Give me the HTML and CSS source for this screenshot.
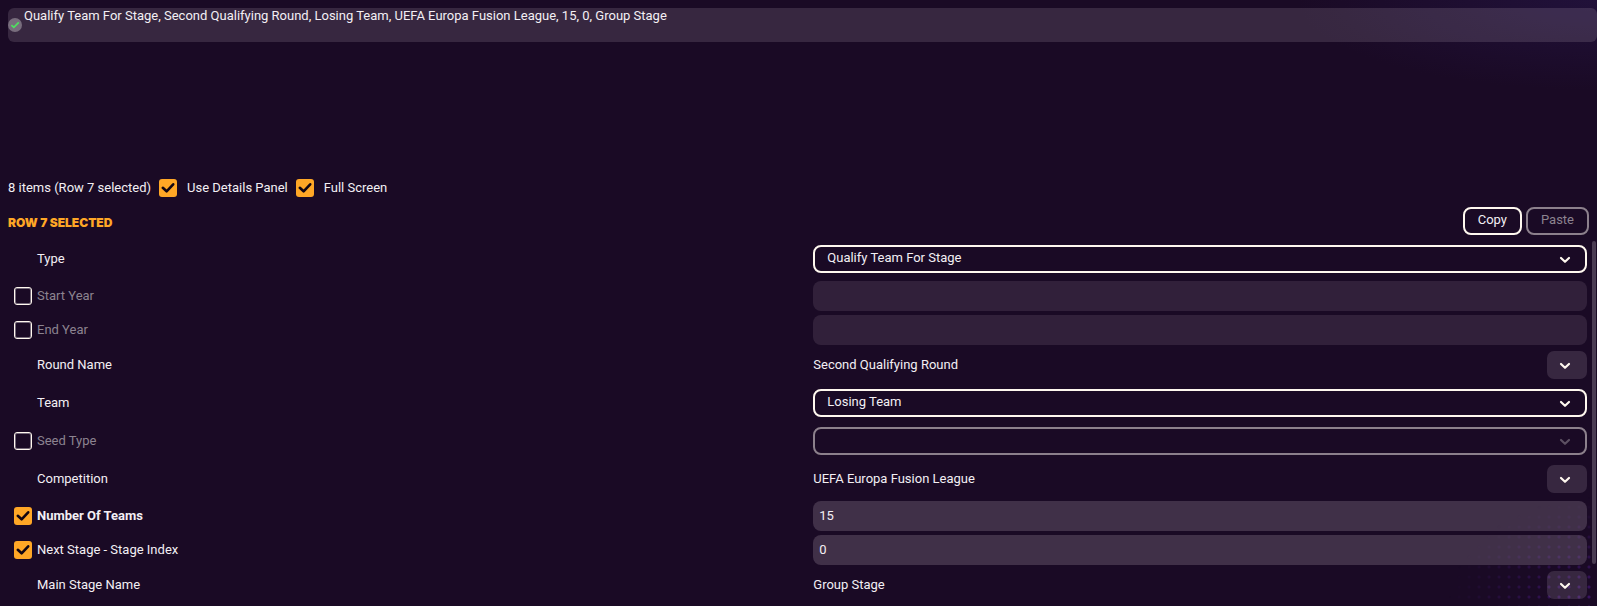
FILE: index.html
```html
<!DOCTYPE html>
<html lang="en">
<head>
    <meta charset="UTF-8">
    <meta name="viewport" content="width=device-width, initial-scale=1.0">
    <title>Row Details</title>
    <link rel="stylesheet" href="styles.css">
</head>
<body>
    <svg class="defs" aria-hidden="true">
        <symbol id="chevron" viewBox="0 0 12 8"><path d="M2 2l4 3.8L10 2" fill="none" stroke="currentColor" stroke-width="2.2" stroke-linecap="round" stroke-linejoin="round"/></symbol>
    </svg>

    <div class="rows">
        <div class="row">
            <svg class="status" viewBox="0 0 14 14" aria-hidden="true"><circle cx="7" cy="7" r="7" fill="#786d7d"/><path d="M3.4 7.2l2.4 2.2 5-5" fill="none" stroke="#4fe060" stroke-width="1.7"/></svg>
            <span class="summary">Qualify Team For Stage, Second Qualifying Round, Losing Team, UEFA Europa Fusion League, 15, 0, Group Stage</span>
        </div>
    </div>

    <div class="toolbar">
        <span class="count">8 items (Row 7 selected)</span>
        <label><input type="checkbox" checked>Use Details Panel</label>
        <label><input type="checkbox" checked>Full Screen</label>
    </div>

    <div class="heading">
        <h2>ROW 7 SELECTED</h2>
        <button class="outline">Copy</button>
        <button class="outline" disabled>Paste</button>
    </div>

    <div class="details">
        <div class="fields">
            <div class="field">
                <label class="name" for="type">Type</label>
                <div class="select">
                    <select id="type"><option>Qualify Team For Stage</option></select>
                    <svg class="chevron"><use href="#chevron"/></svg>
                </div>
            </div>
            <div class="field text off">
                <input type="checkbox" id="useStart" aria-label="Use start year">
                <label class="name" for="start">Start Year</label>
                <input type="text" id="start" disabled>
            </div>
            <div class="field text off">
                <input type="checkbox" id="useEnd" aria-label="Use end year">
                <label class="name" for="end">End Year</label>
                <input type="text" id="end" disabled>
            </div>
            <div class="field">
                <span class="name">Round Name</span>
                <div class="picker">
                    <span>Second Qualifying Round</span>
                    <button class="drop" aria-label="Round Name"><svg class="chevron"><use href="#chevron"/></svg></button>
                </div>
            </div>
            <div class="field">
                <label class="name" for="team">Team</label>
                <div class="select">
                    <select id="team"><option>Losing Team</option></select>
                    <svg class="chevron"><use href="#chevron"/></svg>
                </div>
            </div>
            <div class="field off">
                <input type="checkbox" id="useSeed" aria-label="Use seed type">
                <label class="name" for="seed">Seed Type</label>
                <div class="select">
                    <select id="seed" disabled><option></option></select>
                    <svg class="chevron"><use href="#chevron"/></svg>
                </div>
            </div>
            <div class="field">
                <span class="name">Competition</span>
                <div class="picker">
                    <span>UEFA Europa Fusion League</span>
                    <button class="drop" aria-label="Competition"><svg class="chevron"><use href="#chevron"/></svg></button>
                </div>
            </div>
            <div class="field text">
                <input type="checkbox" id="useTeams" aria-label="Use number of teams" checked>
                <label class="name bold" for="teams">Number Of Teams</label>
                <input type="text" id="teams" value="15">
            </div>
            <div class="field text">
                <input type="checkbox" id="useIndex" aria-label="Use next stage" checked>
                <label class="name" for="index">Next Stage - Stage Index</label>
                <input type="text" id="index" value="0">
            </div>
            <div class="field">
                <span class="name">Main Stage Name</span>
                <div class="picker">
                    <span>Group Stage</span>
                    <button class="drop" aria-label="Main Stage Name"><svg class="chevron"><use href="#chevron"/></svg></button>
                </div>
            </div>
        </div>
        <div class="scroll"><div class="thumb"></div></div>
    </div>
</body>
</html>
```
FILE: styles.css
```css
* {
    box-sizing: border-box;
}

html {
    background: radial-gradient(ellipse 300px 90px at 100% 0, #21113a, transparent) #1a0a25;
}

body {
    margin: 0;
    padding: 8px 0 0 8px;
    min-height: 100vh;
    color: #f3eff4;
    font: 13px/18px Roboto, "Liberation Sans", sans-serif;
    position: relative;
}

/* dotted pattern fading in from the bottom right corner */
body::before {
    content: "";
    position: absolute;
    z-index: -1;
    right: 0;
    bottom: 0;
    width: 150px;
    height: 110px;
    background: radial-gradient(circle, #3c1468 1px, transparent 2px) 7px 6px / 10px 10px;
    -webkit-mask-image: radial-gradient(ellipse at 100% 100%, #000, transparent 70%);
    mask-image: radial-gradient(ellipse at 100% 100%, #000, transparent 70%);
}

.defs {
    display: none;
}

button, input, select {
    font: inherit;
    color: inherit;
    margin: 0;
}

.rows {
    height: 162px;
}

.row {
    display: flex;
    height: 34px;
    border-radius: 6px;
    background: rgba(255, 238, 250, 0.13);
}

.status {
    width: 14px;
    height: 14px;
    margin: 10px 2px 0 0;
}

.summary {
    line-height: 16px;
}

.toolbar {
    display: flex;
    align-items: center;
    gap: 8px;
    height: 36px;
}

.toolbar label {
    display: flex;
    align-items: center;
    gap: 10px;
}

input[type="checkbox"] {
    appearance: none;
    flex: none;
    width: 18px;
    height: 18px;
    border: 1px solid #fff8ef;
    border-radius: 3px;
    background: transparent;
    box-shadow: inset 0 0 0 1px #75697a;
}

input[type="checkbox"]:checked {
    border: none;
    box-shadow: none;
    background: #ffa726 url("data:image/svg+xml,%3Csvg xmlns='http://www.w3.org/2000/svg' viewBox='0 0 18 18'%3E%3Cpath d='M3.8 8.8l3.8 3.5 6.6-7' fill='none' stroke='%23120612' stroke-width='2.6' stroke-linecap='round' stroke-linejoin='round'/%3E%3C/svg%3E");
}

.heading {
    display: flex;
    align-items: center;
    gap: 4px;
    height: 34px;
    padding-right: 8px;
}

.heading h2 {
    flex: 1;
    margin: 0;
    color: #ffa726;
    font-family: Inter, "Liberation Sans", sans-serif;
    font-size: 12px;
    font-weight: 900;
}

.outline {
    height: 28px;
    margin-bottom: 4px;
    padding: 0 13px 3px;
    border: 2px solid #fff8ef;
    border-radius: 8px;
    background: transparent;
}

.outline:disabled {
    border-color: #8c808c;
    color: #8c8390;
}

.details {
    display: flex;
    gap: 5px;
    padding-right: 1px;
}

.fields {
    flex: 1;
}

.field {
    display: grid;
    grid-template-columns: 29px calc(51% - 29px) 49%;
    align-items: center;
    height: 38px;
}

.field.text {
    height: 34px;
    padding: 3px 0 1px;
}

.field > input[type="checkbox"] {
    margin-left: 6px;
}

.name {
    grid-column: 2;
}

.off .name {
    color: #8c8390;
}

.bold {
    font-weight: 700;
}

.select {
    position: relative;
    height: 28px;
}

.select select {
    appearance: none;
    display: block;
    width: 100%;
    height: 28px;
    padding: 0 40px 3px 12px;
    border: 2px solid #fff8ef;
    border-radius: 8px;
    background: transparent;
}

.select select:disabled {
    border-color: #8c808c;
    opacity: 1;
}

.chevron {
    display: block;
    width: 12px;
    height: 8px;
    color: #fff8ef;
}

.select .chevron {
    position: absolute;
    right: 16px;
    top: 11px;
    pointer-events: none;
}

.off .chevron {
    color: #5c5062;
}

input[type="text"] {
    width: 100%;
    height: 30px;
    padding: 0 6px 2px;
    border: none;
    border-radius: 8px;
    background: rgba(255, 238, 250, 0.17);
}

input[type="text"]:disabled {
    background: rgba(255, 238, 250, 0.1);
}

.picker {
    display: flex;
    align-items: center;
    justify-content: space-between;
}

.drop {
    width: 40px;
    height: 28px;
    padding: 2px 16px 0 12px;
    border: none;
    border-radius: 7px;
    background: rgba(255, 238, 250, 0.13);
}

.scroll {
    width: 4px;
    padding-top: 1px;
}

.thumb {
    height: 89%;
    border-radius: 2px;
    background: #4a3c52;
}
```
